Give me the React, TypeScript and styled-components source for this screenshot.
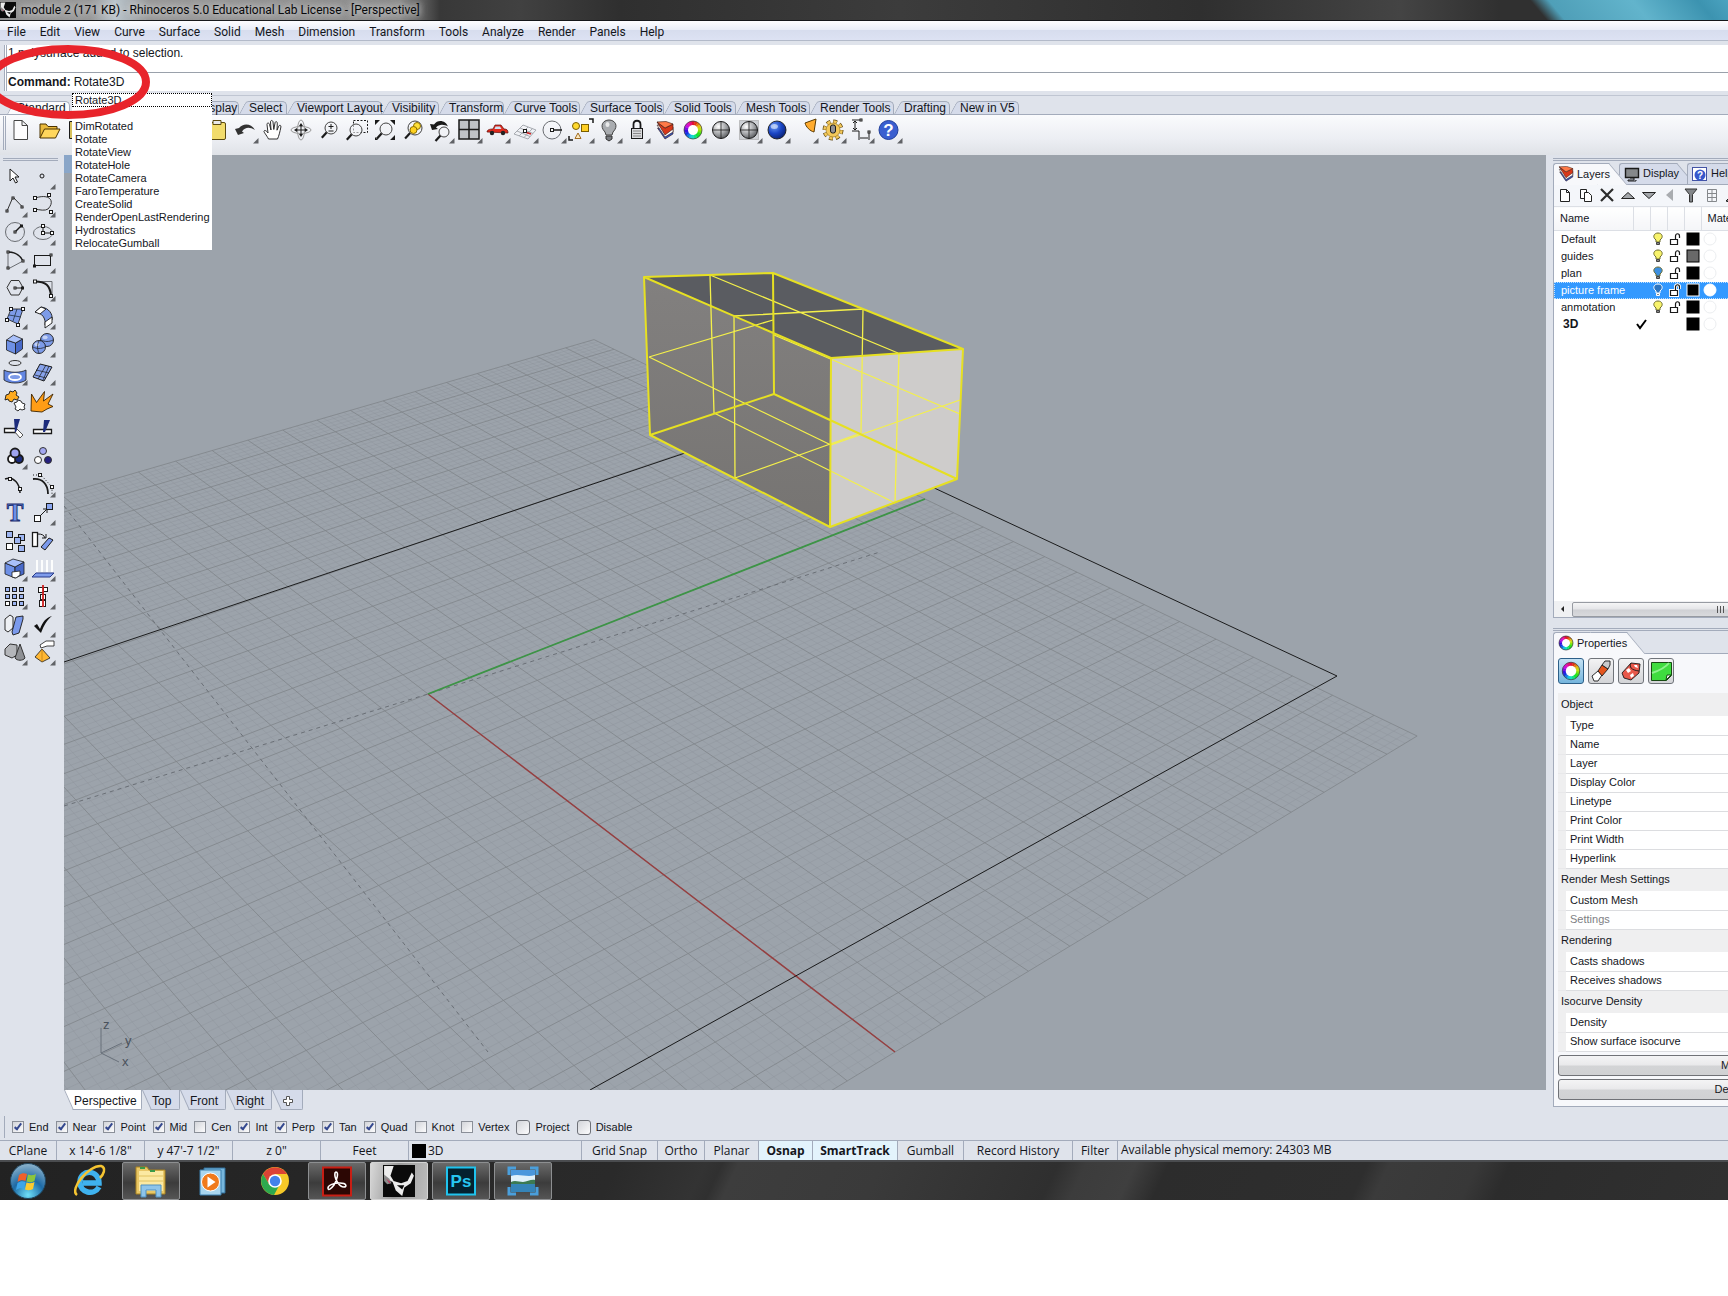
import React from "react";
import styled, { createGlobalStyle, css } from "styled-components";

const sans = `"Liberation Sans", Arial, sans-serif`;
const human = `"Open Sans", "Noto Sans", sans-serif`;
const caption = `Roboto, "Open Sans", sans-serif`;

const c = {
  chrome: "#dfe3eb",
  tab: "#d5dbea",
  edge: "#a3abbb",
  view: "#9ca3ab",
  text: "#14161c",
  blue: "#7d9be8",
  navy: "#1c2c7c",
};

const Global = createGlobalStyle`
  *, *::before, *::after { box-sizing: border-box; }
  body { margin: 0; background: #fff; color: ${c.text}; font: 11px/13px ${sans}; overflow-x: hidden; }
  button, input { font: inherit; color: inherit; }
  ul { list-style: none; margin: 0; padding: 0; }
  svg { display: block; flex: none; }
`;

/* ---------- shell ---------- */

const Window = styled.main`
  display: flex;
  flex-direction: column;
  background: ${c.chrome};
  overflow: hidden;
`;

const TitleBar = styled.header`
  display: flex;
  align-items: center;
  gap: 5px;
  height: 21px;
  border-bottom: 1px solid #15171a;
  font: 12px/20px ${caption};
  color: #08090b;
  text-shadow: 0 0 6px #ddd, 0 0 8px #ccc;
  background:
    linear-gradient(50deg, transparent 0 22px, #4f9fb8 36px, #62b4cc 100px, #3c93b0 150px, #4ba3c0 100%) right / 210px 100% no-repeat,
    linear-gradient(90deg, #8f8f8f 0, #979797 90px, #b9c4cc 115px, #989898 150px, #8c8c8c 400px, #383838 440px, #414141 520px, #2f2f2f 620px, #3c3c3c 900px, #2f2f2f 1200px, #444 1400px, #303030 1500px);
`;

const WindowTitle = styled.h1`
  margin: 0;
  font: inherit;
  white-space: nowrap;
`;

const MenuBar = styled.nav`
  display: flex;
  gap: 14px;
  height: 20px;
  padding-left: 7px;
  border-bottom: 1px solid #b3bac9;
  background: linear-gradient(#fdfdff, #eaeef8 45%, #d7ddee 50%, #dde2f3);
`;

const MenuItem = styled.button`
  padding: 1px 0 0;
  border: 0;
  background: none;
  font: 12px/20px ${caption};
`;

/* ---------- command area ---------- */

const CommandArea = styled.section`
  position: relative;
  z-index: 2;
  height: 54px;
  padding: 4px 0 3px 4px;
`;

const CommandBox = styled.div`
  border-left: 3px double ${c.edge};
  background: #fff;
  font-size: 12px;
`;

const History = styled.p`
  height: 28px;
  margin: 0;
  padding-left: 1px;
  line-height: 16px;
  border-bottom: 1px solid #9aa1ab;
`;

const Prompt = styled.label`
  display: flex;
  align-items: center;
  gap: 3px;
  height: 18px;
  padding-left: 1px;
`;

const CommandInput = styled.input`
  flex: 1;
  height: 16px;
  padding: 0;
  border: 0;
  outline: 0;
  background: none;
`;

const Suggestions = styled.ul`
  position: absolute;
  left: 72px;
  top: 52px;
  width: 140px;
  background: #fff;
`;

const Suggestion = styled.li<{ $active?: boolean }>`
  height: 13px;
  padding-left: 3px;
  ${(p) =>
    p.$active &&
    css`
      height: 14px;
      margin-bottom: 13px;
      padding-left: 2px;
      line-height: 12px;
      border: 1px dotted #000;
    `}
`;

const Marker = styled.svg`
  position: absolute;
  left: 0;
  top: 0;
  pointer-events: none;
`;

/* ---------- tool bars ---------- */

const TabStrip = styled.nav`
  display: flex;
  height: 19px;
  padding: 5px 0 0 7px;
  border-top: 1px solid #c0c6d2;
`;

const ToolTab = styled.button<{ $w: number; $on?: boolean }>`
  position: relative;
  isolation: isolate;
  flex: none;
  width: ${(p) => p.$w}px;
  padding: 1px 0 0 10px;
  border: 0;
  background: none;
  text-align: left;
  white-space: nowrap;
  font-size: 12px;
  line-height: 13px;
  &::before,
  &::after {
    content: "";
    position: absolute;
    z-index: -1;
    top: 0;
    bottom: 0;
    background: ${(p) => (p.$on ? "#fafbfd" : c.tab)};
    border-top: 1px solid ${c.edge};
  }
  &::before {
    left: 0;
    width: 50%;
    border-left: 1px solid ${c.edge};
    border-radius: 3px 0 0 0;
    transform: skewX(-28deg);
    transform-origin: left bottom;
  }
  &::after {
    right: 0;
    width: 55%;
    border-right: 1px solid ${c.edge};
    border-radius: 0 5px 0 0;
  }
`;

const ToolBar = styled.div`
  display: flex;
  height: 41px;
  padding: 1px 0 0 3px;
  border-top: 1px solid ${c.edge};
  background: linear-gradient(#fafbfd, #eceef3 60%, #dfe2e7);
`;

const Grip = styled.span`
  width: 4px;
  height: 34px;
  border-left: 3px double ${c.edge};
`;

const ToolButton = styled.button`
  flex: none;
  width: 28px;
  height: 28px;
  padding: 0;
  border: 0;
  background: none;
`;

/* ---------- middle ---------- */

const Body = styled.div`
  display: flex;
`;

const SideTools = styled.aside`
  flex: none;
  width: 64px;
  padding-top: 3px;
`;

const SideGrip = styled.div`
  height: 4px;
  margin: 0 6px 0 3px;
  border-top: 3px double ${c.edge};
`;

const SideGrid = styled.div`
  display: grid;
  grid-template-columns: 28px 28px;
`;

const Center = styled.section`
  flex: 1;
  min-width: 0;
`;

const Scene = styled.svg`
  width: 100%;
  height: 935px;
  background: ${c.view};
`;

const ViewTabs = styled.nav`
  display: flex;
  height: 20px;
  font: 12px/20px ${sans};
`;

const ViewTab = styled.button<{ $w: number; $on?: boolean }>`
  position: relative;
  isolation: isolate;
  display: flex;
  align-items: center;
  flex: none;
  width: ${(p) => p.$w}px;
  padding: 1px 0 0 10px;
  border: 0;
  background: none;
  &::before,
  &::after {
    content: "";
    position: absolute;
    z-index: -1;
    top: 0;
    bottom: 0;
    background: ${(p) => (p.$on ? "#fff" : c.tab)};
    border-bottom: 1px solid ${c.edge};
  }
  &::before {
    left: 0;
    width: 50%;
    border-left: 1px solid ${c.edge};
    transform: skewX(24deg);
    transform-origin: left top;
  }
  &::after {
    right: 0;
    width: 55%;
    border-right: 1px solid ${c.edge};
    border-radius: 0 0 2px 0;
  }
`;

/* ---------- right panels ---------- */

const Dock = styled.aside`
  flex: none;
  width: 182px;
  padding: 3px 0 0 7px;
  overflow: hidden;
`;

const DockGrip = styled.div`
  width: 366px;
  height: 5px;
  border-top: 3px double ${c.edge};
`;

const PanelTabs = styled.nav`
  display: flex;
  width: 366px;
  height: 22px;
  border-bottom: 1px solid ${c.edge};
`;

const PanelTab = styled.button<{ $w: number; $on?: boolean }>`
  position: relative;
  isolation: isolate;
  z-index: ${(p) => (p.$on ? 1 : 0)};
  display: flex;
  align-items: center;
  gap: 3px;
  flex: none;
  width: ${(p) => p.$w}px;
  height: ${(p) => (p.$on ? 22 : 21)}px;
  margin-right: -8px;
  padding: 0 0 0 5px;
  border: 0;
  background: none;
  &::before,
  &::after {
    content: "";
    position: absolute;
    z-index: -1;
    top: 0;
    bottom: 0;
    background: ${(p) => (p.$on ? "#f7f8fb" : c.tab)};
    border-top: 1px solid ${c.edge};
  }
  &::before {
    left: 0;
    width: 60%;
    border-left: 1px solid ${c.edge};
    border-radius: 3px 0 0 0;
  }
  &::after {
    right: 18px;
    width: 40%;
    border-right: 1px solid ${c.edge};
    transform: skewX(40deg);
    transform-origin: right top;
  }
`;

const Panel = styled.section`
  width: 366px;
  border: 1px solid ${c.edge};
  border-top: 0;
`;

const LayersPanel = styled(Panel)`
  height: 433px;
  display: flex;
  flex-direction: column;
  background: #fff;
`;

const PanelTools = styled.div`
  display: flex;
  gap: 1px;
  height: 21px;
  padding-left: 1px;
  background: #f4f6fa;
`;

const SmallTool = styled.button`
  flex: none;
  width: 20px;
  height: 20px;
  padding: 0;
  border: 0;
  background: none;
`;

const LayerTable = styled.table`
  width: 364px;
  table-layout: fixed;
  border-collapse: collapse;
  text-align: left;
  thead th {
    height: 24px;
    padding: 0 0 0 6px;
    border: solid #dcdfe5;
    border-width: 1px 1px 1px 0;
    font-weight: 400;
    background: linear-gradient(#fff, #f4f5f8);
  }
  td,
  tbody th {
    height: 17px;
    padding: 0;
    font-weight: 400;
  }
`;

const LayerRow = styled.tr<{ $on?: boolean; $current?: boolean }>`
  ${(p) =>
    p.$on &&
    css`
      color: #fff;
      background: #3399ff;
      outline: 1px dotted #bfe0ff;
      outline-offset: -1px;
    `}
  th:first-child {
    padding-left: 7px;
    ${(p) =>
      p.$current &&
      css`
        padding-left: 9px;
        font-weight: 700;
        font-size: 12px;
      `}
  }
`;

const ScrollTrack = styled.div`
  display: flex;
  align-items: center;
  margin-top: auto;
  height: 16px;
  background: #f0f1f3;
`;

const ScrollArrow = styled.button`
  width: 18px;
  height: 16px;
  padding: 0 0 0 4px;
  border: 0;
  background: none;
`;

const Thumb = styled.div`
  display: flex;
  justify-content: center;
  align-items: center;
  gap: 2px;
  width: 296px;
  height: 15px;
  border: 1px solid #979ba2;
  border-radius: 2px;
  background: linear-gradient(#f5f5f6, #e4e5e8 48%, #cfd0d4 52%, #d9dadd);
  i {
    width: 1px;
    height: 7px;
    background: #555;
  }
`;

const Splitter = styled.div`
  width: 366px;
  height: 13px;
  border-bottom: 3px double ${c.edge};
  margin-bottom: 1px;
`;

const PropertiesPanel = styled(Panel)`
  padding: 4px 0 6px 4px;
  background: #f7f8fb;
`;

const PropButtons = styled.div`
  display: flex;
  gap: 4px;
  margin-bottom: 9px;
`;

const PropButton = styled.button<{ $on?: boolean }>`
  width: 26px;
  height: 26px;
  padding: 0;
  border: 1px solid ${(p) => (p.$on ? "#2c5f88" : "#70747a")};
  border-radius: 3px;
  background: ${(p) => (p.$on ? "linear-gradient(#c5e2f4, #75b5dd)" : "linear-gradient(#f3f3f4, #d3d4d7)")};
`;

const PropTable = styled.table`
  width: 360px;
  border-collapse: collapse;
  text-align: left;
  background: #fff;
  th {
    height: 23px;
    padding: 0 0 0 3px;
    font-weight: 400;
    background: #efeff0;
  }
  td {
    height: 19px;
    padding: 0 0 0 4px;
    border-bottom: 1px solid #dcdde0;
  }
  td:first-child {
    width: 8px;
    padding: 0;
    border-color: #e8e8ea;
    background: #efeff0;
  }
`;

const PropName = styled.td<{ $dim?: boolean }>`
  color: ${(p) => (p.$dim ? "#7e8084" : "inherit")};
`;

const WideButton = styled.button`
  display: block;
  width: 356px;
  height: 21px;
  margin-top: 3px;
  padding: 0;
  border: 1px solid #707277;
  border-radius: 3px;
  background: linear-gradient(#f4f4f5, #e9e9eb 48%, #d3d4d6 52%, #d0d1d3);
`;

/* ---------- bottom ---------- */

const SnapBar = styled.div`
  display: flex;
  align-items: center;
  gap: 7px;
  height: 26px;
  margin-top: 4px;
  padding-left: 4px;
`;

const SnapGrip = styled.span`
  width: 2px;
  height: 22px;
  border-left: 1px solid ${c.edge};
  margin-right: -1px;
`;

const Snap = styled.label<{ $big?: boolean }>`
  display: flex;
  align-items: center;
  gap: 5px;
  input {
    appearance: none;
    position: relative;
    width: ${(p) => (p.$big ? 14 : 12)}px;
    height: ${(p) => (p.$big ? 15 : 12)}px;
    margin: 0;
    border: 1px solid ${(p) => (p.$big ? "#6e7178" : "#8a8f98")};
    border-radius: ${(p) => (p.$big ? 3 : 0)}px;
    background: linear-gradient(135deg, #d3d5da, #fcfcfd);
  }
  input:checked::after {
    content: "";
    position: absolute;
    left: 3px;
    top: 0;
    width: 4px;
    height: 8px;
    border: solid #34488f;
    border-width: 0 2px 2px 0;
    transform: rotate(38deg);
  }
`;

const StatusBar = styled.footer`
  display: flex;
  height: 20px;
  border-top: 1px solid ${c.edge};
  font: 12px/18px ${human};
  white-space: nowrap;
`;

const Cell = styled.button<{ $w: number; $on?: boolean; $left?: boolean }>`
  display: flex;
  flex: none;
  align-items: center;
  justify-content: ${(p) => (p.$left ? "flex-start" : "center")};
  width: ${(p) => p.$w}px;
  padding: 0 3px;
  border: 0;
  border-right: 1px solid ${c.edge};
  background: ${(p) => (p.$on ? "#e3f3fc" : "none")};
  font-weight: ${(p) => (p.$on ? 700 : 400)};
`;

const Swatch = styled.span`
  width: 14px;
  height: 14px;
  margin-right: 2px;
  background: #000;
`;

const StatusNote = styled.span`
  padding-left: 3px;
`;

const TaskBar = styled.nav`
  display: flex;
  gap: 4px;
  height: 40px;
  border-top: 2px solid #4a4c4f;
  background: linear-gradient(115deg, #222 0, #2a2a2a 560px, #333 640px, #303030 655px, #3d3d3d 670px, #3a3a3a 800px, #2f2f2f 960px, #3c3c3c 985px, #3f3f3f 1030px, #2c2c2c 1060px, #2e2e2e 1240px, #3b3b3b 1260px, #383838 1340px, #2c2c2c 1370px, #333 1728px);
`;

const Task = styled.button<{ $open?: boolean; $front?: boolean; $start?: boolean }>`
  display: flex;
  align-items: center;
  justify-content: center;
  flex: none;
  width: ${(p) => (p.$start ? 56 : 58)}px;
  height: 38px;
  padding: 0;
  border: 1px solid transparent;
  border-radius: 2px;
  background: none;
  ${(p) =>
    p.$open &&
    css`
      border-color: #8d8f91;
      background: linear-gradient(#6a6a6a, #3c3c3c 55%, #555);
    `}
  ${(p) =>
    p.$front &&
    css`
      border-color: #d4d4d4;
      background: linear-gradient(100deg, #d8d8d8, #9a9a9a 45%, #bdbdbd);
    `}
`;

/* ---------- drawings ---------- */

const K = "#1a1a1a";
const ln = { fill: "none", stroke: K, strokeWidth: 1 } as const;
const thin = { fill: "none", stroke: "#6a6d72", strokeWidth: 1 } as const;

const Dot = ({ x, y, s = 3 }: { x: number; y: number; s?: number }) => (
  <rect x={x - s / 2} y={y - s / 2} width={s} height={s} fill="#fff" stroke={K} />
);

const Wheel = ({ x, y, r, w }: { x: number; y: number; r: number; w: number }) => (
  <g fill="none" strokeWidth={w}>
    <circle cx={x} cy={y} r={r} fill="#fff" stroke="none" />
    {Array.from({ length: 18 }, (_, i) => {
      const a = (i * Math.PI) / 9;
      const b = a + 0.4;
      return (
        <path
          key={i}
          stroke={`hsl(${(90 + i * 20) % 360} 85% 48%)`}
          d={`M${x + r * Math.cos(a)} ${y + r * Math.sin(a)}A${r} ${r} 0 0 1 ${x + r * Math.cos(b)} ${y + r * Math.sin(b)}`}
        />
      );
    })}
    <circle cx={x} cy={y} r={r + w / 2} stroke="#3a3a3a" strokeWidth=".7" />
  </g>
);

const Lens = ({ x, y, r = 6 }: { x: number; y: number; r?: number }) => (
  <g>
    <path d={`M${x - r * 0.7} ${y + r * 0.7}l-5 5.5`} stroke={K} strokeWidth="2.200" />
    <circle cx={x} cy={y} r={r} fill="#f2f3f6" fillOpacity=".6" stroke="#444" />
  </g>
);

const Ball = ({ x, y, r, fill }: { x: number; y: number; r: number; fill: string }) => (
  <g>
    <circle cx={x} cy={y} r={r} fill={fill} stroke={K} strokeWidth=".9" />
    <ellipse cx={x - r * 0.3} cy={y - r * 0.4} rx={r * 0.4} ry={r * 0.28} fill="#fff" opacity=".55" />
  </g>
);

const Sphere = ({ grid }: { grid?: boolean }) => (
  <g>
    {grid && <rect x="4.5" y="4.5" width="19" height="19" fill="#cdd0d4" stroke="#999" strokeDasharray="1 1" />}
    <circle cx="14" cy="14" r="8.5" fill="url(#metal)" stroke={K} />
    <path d="M14 5.500V22.500M5.500 14h17" stroke={K} strokeWidth=".8" />
  </g>
);

const Square = ({ x, y, fill = "#9db5f2", s = 6 }: { x: number; y: number; fill?: string; s?: number }) => (
  <rect x={x} y={y} width={s} height={s} fill={fill} stroke={K} />
);

const LayersGlyph = () => (
  <g stroke="#30130e" strokeWidth=".6" strokeLinejoin="round">
    <path d="M6.500 12l7.500 11 8-5V13z" fill="#3157c8" />
    <path d="M6 9l8 12 8-5V11z" fill="#fff" />
    <path d="M6 6l8 13 8-6V8l-8 4z" fill="#d8381a" />
    <path d="M6 6l8 6 8-4-7-2.500z" fill="#ff7a48" />
  </g>
);

const tools: [string, React.ReactNode, boolean?][] = [
  ["New", <path d="M7 4.500h8l5.500 5v14H7z M15 4.500v5h5.500" fill="#fdfdfe" stroke="#444" />],
  ["Open", <g stroke="#4b3300"><path d="M5 22V8h6l2 2.500h9V13" fill="#e9b93c" /><path d="M5 22l4.500-9H25l-4.500 9z" fill="#ffd65c" /></g>],
  ["Save", <path d="M6.500 5.500h15v17h-15z M10 5.500v6h8v-6" fill="#d7c15e" stroke={K} />],
  ["Print", <path d="M5 12h18v8H5z" {...ln} />],
  ["Notes", <path d="M7 5h14v18H7z" {...ln} />],
  ["Cut", <path d="M9 5l8 15M19 5l-8 15" {...ln} />],
  ["Copy", <path d="M6 6h9v12H6z" {...ln} />],
  ["Paste", <g stroke="#5b4a10"><rect x="5.500" y="6.500" width="17" height="17" rx="1.500" fill="#f2dc6c" /><path d="M10 4.500h8v4h-8z" fill="#e8e8e8" /></g>],
  ["Undo", <path d="M4 13l3 6 6-2-2-1.500c3-4 7-5 13-1.500-4-7-12-7-16-2z" fill="#333" />, true],
  ["Pan", <path d="M9.500 23c-2-4-5-7-4.500-8 1-1.500 3 .5 4 2L8 8.500c0-2 2-2 2.500 0L12 14l-.5-8c0-2 2.300-2 2.500 0l.8 7.500L16 7c.2-2 2.400-1.600 2.300.2l-.3 7 1.700-4c.8-1.700 2.600-.9 2.200.8-1 5-2 9-3.400 12z" fill="#fff" stroke={K} strokeWidth=".9" />],
  ["Rotate view", <g><ellipse cx="14" cy="14" rx="10" ry="3.500" {...thin} stroke="#999" /><ellipse cx="14" cy="14" rx="3.500" ry="10" {...thin} stroke="#999" /><path d="M14 9v10M9 14h10" stroke={K} /><path d="M12 10l2-3 2 3zM12 18l2 3 2-3zM10 12l-3 2 3 2zM18 12l3 2-3 2z" fill={K} /></g>],
  ["Zoom dynamic", <g><Lens x={16} y={12} /><path d="M13.500 10.500h5M16 8v5M13.500 15h5" stroke={K} /></g>],
  ["Zoom window", <g><rect x="10.500" y="4.500" width="14" height="12" {...ln} strokeDasharray="2 1.500" /><Lens x={13} y={14} /></g>],
  ["Zoom extents", <g><Lens x={15} y={13} /><path d="M4 4h5L4 9zM24 4v5l-5-5zM24 24h-5l5-5zM4 24v-3l3 3z" fill={K} /></g>],
  ["Zoom selected", <g><Lens x={16} y={12} r={7} /><circle cx="18" cy="10" r="3.500" fill="#ffe03a" stroke="#8a6d00" /><circle cx="14.500" cy="14" r="3.500" fill="#ffd21f" stroke="#8a6d00" /></g>],
  ["Undo view", <g><path d="M3 8l2 6 6-1-2-1.500c3-4 9-3 12-1 -2-6-10-8-14-2z" fill={K} /><Lens x={17} y={16} r={5} /></g>, true],
  ["Four viewports", <g><rect x="4" y="4" width="20" height="19" fill="#bfc2c6" stroke={K} strokeWidth="1.500" /><path d="M14 4v19M4 13.500h20" stroke={K} strokeWidth="1.500" /></g>, true],
  ["Named view", <g><path d="M4 16c0-3 5-3 6-3l2-4h6l3 4c3 0 4 1 4 4z" fill="#e02a1e" stroke="#5c0d08" strokeWidth=".7" /><path d="M12.500 10.500h4.500l1.500 2.500h-7z" fill="#cfe2f2" /><circle cx="9" cy="17" r="2.200" fill="#222" /><circle cx="20" cy="17" r="2.200" fill="#222" /></g>, true],
  ["Construction plane", <g><path d="M3 18l9-9 13 5-8 9zM6 15l13 5.500M9 12l13 5.500M8 20l9-9M13 21.500l8.500-9" fill="none" stroke="#a6aab0" /><path d="M14 16l6 2" stroke="#c22" strokeWidth="1.500" /><Dot x={14} y={15} /></g>, true],
  ["Set center", <g><circle cx="13" cy="14" r="9" {...thin} /><path d="M13 14h10" stroke={K} strokeWidth="1.500" /><Dot x={13} y={14} /></g>, true],
  ["Select", <g><path d="M22 3h4v4M2 20v4h4" {...ln} strokeWidth="1.500" /><circle cx="9" cy="10" r="3.500" fill="#ffd92e" stroke="#7b5f00" /><rect x="14.500" y="8.500" width="7" height="7" fill="#ffcf24" stroke="#7b5f00" /><path d="M11 17l3 5.500H8z" fill="#fbe9c0" stroke="#a06a20" /></g>, true],
  ["Hide", <g><path d="M10 16c-6-6-2-12 4-12s10 6 4 12l-1 3h-6z" fill="#a9acb0" stroke="#444" /><path d="M11 20h6v3l-3 2-3-2z" fill="#787b80" stroke="#333" /><ellipse cx="12.500" cy="8.500" rx="2" ry="2.600" fill="#e8e9ea" /></g>, true],
  ["Lock", <g><path d="M10.500 13V8.500c0-5 7-5 7 0V13" {...ln} strokeWidth="1.800" /><rect x="8.500" y="12.500" width="11" height="10" fill="#d9dadc" stroke={K} /><path d="M10 15h8M10 17.500h8M10 20h8" stroke="#888" /></g>, true],
  ["Layers", <LayersGlyph />, true],
  ["Properties", <Wheel x={14} y={14} r={7} w={4} />, true],
  ["Shade", <Sphere />],
  ["Ghosted", <Sphere grid />, true],
  ["Render", <Ball x={14} y={14} r={9} fill="url(#sea)" />, true],
  ["Spotlight", <path d="M14 7l11-4-2 13c-4-1-8-5-9-9z" fill="#ffab2e" stroke="#5a3a00" />, true],
  ["Options", <g><circle cx="14" cy="14" r="8" fill="none" stroke="#5b430c" strokeWidth="5" strokeDasharray="3.600 2.680" /><circle cx="14" cy="14" r="8" fill="none" stroke="#f3c85a" strokeWidth="3.500" strokeDasharray="3 3.280" strokeDashoffset="-.3" /><circle cx="14" cy="14" r="7" fill="#f3c85a" stroke="#8a6a1c" strokeWidth=".6" /><rect x="11.500" y="9" width="5" height="8" rx="2" fill="#8f9094" stroke={K} /></g>, true],
  ["Dimension", <g><path d="M5 4h9M5 15h7M8 5v9M12 15v9M22 17v7M13 22h8" {...ln} /><path d="M6 7l2-2 2 2M6 12l2 2 2-2" {...ln} /><Dot x={14} y={4} s={2} /><Dot x={22} y={16} s={2} /></g>, true],
  ["Help", <g><circle cx="13.500" cy="14" r="9.500" fill="#3a5fd0" stroke="#22409c" /><text x="13.500" y="20" textAnchor="middle" fontFamily="Liberation Sans" fontWeight="700" fontSize="17" fill="#fff">?</text></g>, true],
];

const side: [string, React.ReactNode, boolean?][] = [
  ["Cancel", <path d="M10 7v12l3-3 2.500 5 2-1-2.500-5h4z" fill="#fff" stroke={K} />],
  ["Point", <circle cx="14" cy="14" r="2" {...ln} />, true],
  ["Polyline", <g><path d="M7 21l6-14 10 10.500" {...thin} stroke="#333" /><Dot x={7} y={21} s={2} /><Dot x={13} y={8} s={2} /><Dot x={22} y={17} s={2} /></g>, true],
  ["Curve", <g><path d="M7 8c16-5 20 4 13 11-3 2-8 1-13 0" {...thin} stroke="#333" /><Dot x={7} y={8} /><Dot x={21} y={5} /><Dot x={7} y={20} /><Dot x={23} y={22} /></g>, true],
  ["Circle", <g><circle cx="15" cy="14" r="9.500" {...thin} /><path d="M15 14l6-6" stroke={K} strokeWidth="1.500" /><Dot x={15} y={14} s={2} /><Dot x={21.5} y={8} s={2} /></g>, true],
  ["Ellipse", <g><ellipse cx="15" cy="15" rx="9.500" ry="6.500" {...thin} /><path d="M15 15h9M15 9v6" stroke={K} /><Dot x={15} y={15} /><Dot x={24} y={15} /><Dot x={15} y={8} /></g>, true],
  ["Arc", <g><path d="M8 6c8 0 12 3 15 9" {...ln} strokeWidth="1.500" /><path d="M8 6v17l15-8" {...thin} /><Dot x={8} y={6} s={2} /><Dot x={23} y={15} s={2} /><Dot x={8} y={22} s={2} /></g>, true],
  ["Rectangle", <g><rect x="6.500" y="9.500" width="16" height="10" {...ln} /><Dot x={6.5} y={20} s={2} /><Dot x={23} y={9} s={2} /></g>, true],
  ["Polygon", <g><path d="M11 6.500h8l4 7-4 7.500h-8l-4-7.500z" {...thin} stroke="#333" /><path d="M15 14h8" stroke={K} /><Dot x={15} y={14} s={2} /><Dot x={22.5} y={14} s={2} /></g>, true],
  ["Fillet", <g><path d="M7 7.500h17V22" {...thin} /><path d="M7 7.500c11 0 15 4 16 14" {...ln} strokeWidth="2" /><Dot x={7} y={7.5} /><Dot x={23} y={22} /></g>, true],
  ["Surface", <g><path d="M11 7h12l-5 15-11-5z" fill={c.blue} stroke={K} strokeWidth=".8" /><path d="M9 13l12 2M17 7l-4 12" stroke="#234" strokeWidth=".8" /><Dot x={11} y={7} /><Dot x={23} y={7} /><Dot x={7} y={18} /><Dot x={18} y={23} /></g>, true],
  ["Extend surface", <g stroke={K} strokeWidth=".9"><path d="M7 10l6-5c8 1 12 7 11 13l-7 5c1-7-3-12-10-13z" fill={c.blue} /><path d="M7 10l6-5 5 2-6 5zM24 15v6l-7 5v-6z" fill="#fff" /></g>, true],
  ["Box", <g stroke={K} strokeWidth=".8"><path d="M6.500 10v10l9 4V13z" fill="#6e90e6" /><path d="M15.500 13v11l7-5V9z" fill="#4869c8" /><path d="M6.500 10l7-5 9 4-7 4z" fill="#a9c0fa" /></g>, true],
  ["Spheres", <g><Ball x={19} y={10} r={6.5} fill={c.blue} /><Ball x={11} y={17} r={6.5} fill={c.blue} /><path d="M5 17c4 2 8 2 12 0M13 10c4 2 8 2 12 0M11 11c-2 4-2 8 0 12" {...ln} strokeWidth=".7" /></g>, true],
  ["Revolve", <g><ellipse cx="15" cy="5" rx="6" ry="2.500" {...thin} stroke="#333" /><path d="M4 12c5 3 17 3 22 0v10c-5 4-17 4-22 0z" fill="#6487e2" stroke={K} strokeWidth=".8" /><ellipse cx="15" cy="19" rx="6" ry="3" fill={c.blue} stroke="#fff" strokeWidth="1.800" /></g>, true],
  ["Plane", <g><path d="M5 19l7-13 12 3-8 14z" fill="#88a3ec" stroke={K} /><path d="M8 12l13 3M10 21l8-14M7 17l11 3M15 22l6-14" {...ln} strokeWidth=".7" /></g>, true],
  ["Join", <g stroke={K} strokeWidth=".9"><path d="M6 9l3-1 1-3 3 1 2-2 2 3-1 2 3 2-2 3-3-1-2 3-3-1-1-2-3 1z" fill="#ffab1e" /><path d="M14 17l3-1 1-2 3 1 1 2 3 1-1 3 1 2-3 1-2-1-2 2-3-2 1-2z" fill="#fff" /></g>],
  ["Explode", <path d="M3 25L3.500 8l5 8.500L16.500 5.500l-1 9.500L25 8l-5 10 5 2.500-6 2.500-5 3z" fill="#ff9d16" stroke="#3c2400" strokeWidth=".9" />],
  ["Trim", <g><path d="M4.500 14.500h11v4h-11z" fill="#fff" stroke={K} strokeWidth="1.300" /><path d="M17 15l6 6-3 3-5-6z" fill="#fff" stroke="#555" /><path d="M14 5h6l-4 13h-1z" fill={c.navy} /></g>],
  ["Split", <g><path d="M5.500 15.500h18v4h-18z" fill="#fff" stroke={K} strokeWidth="1.300" /><path d="M16 6h6l-5 12h-2z" fill={c.navy} /></g>],
  ["Group", <g stroke={K} strokeWidth="1.800"><circle cx="12" cy="17" r="4" fill="#fff" /><circle cx="19" cy="17" r="4" fill={c.navy} /><circle cx="15" cy="11" r="4.500" fill="#9ea3ee" /></g>, true],
  ["Ungroup", <g stroke="#333"><circle cx="15" cy="9" r="3.500" fill="#a3a8f2" /><circle cx="10" cy="18" r="3.500" fill="#fff" /><circle cx="20" cy="18" r="3.500" fill="#242080" /></g>],
  ["Edit points", <g><path d="M5 9c9-3 15 5 15 14" {...ln} strokeWidth="1.500" /><Dot x={10} y={9} /><Dot x={20} y={19} /></g>],
  ["Control points", <g><path d="M5 9c9-1 15 5 15 15" {...ln} strokeWidth="1.800" /><path d="M5 5h8l11 12v7" {...ln} strokeDasharray="1 2" /><Dot x={12} y={5} /><Dot x={24} y={17} /></g>, true],
  ["Text", <text x="15" y="23" textAnchor="middle" fontFamily="Liberation Serif" fontWeight="700" fontSize="25" fill="#6f90e8" stroke="#1b2e70" strokeWidth=".9">T</text>],
  ["Move", <g><path d="M12 18l7-7M19 15v-4h-4" {...ln} /><Square x={6.5} y={17.5} fill="#fff" /><Square x={18.5} y={5.5} fill="#8aa6f0" /></g>, true],
  ["Copy objects", <g><Square x={6.5} y={5.5} /><Square x={6.5} y={17.5} fill="#fff" /><Square x={18.5} y={8.5} /><Square x={14.5} y={11.5} /><Square x={18.5} y={19.5} /></g>],
  ["Rotate", <g><rect x="4.500" y="6.500" width="5" height="14" fill="#fff" stroke={K} strokeWidth="1.300" /><path d="M10 8c4 0 6 1 7 4M18 8v4h-4" {...ln} /><path d="M13 21l8-9 4 2-8 10z" fill="#7b9aec" stroke={K} /></g>],
  ["Shell", <g stroke={K} strokeWidth=".8"><path d="M5 9v11l10 4V13z" fill="#6e90e6" /><path d="M15 13v11l9-4V8z" fill="#4869c8" /><path d="M5 9l8-4 11 3-9 5z" fill="#a9c0fa" /><path d="M12 18l8-1v4l-4 3-4-1z" fill="#fff" /></g>, true],
  ["Project", <g><path d="M9 6v12M14 6v12M19 6v12M24 6v12" stroke="#fff" strokeWidth="1.800" /><path d="M4 23l4-4h18l-4 4z" fill="#7f9cec" stroke="#26398a" /></g>, true],
  ["Array", <g>{[5, 12, 19].map((y) => [5, 12, 19].map((x) => <Square key={x + "." + y} x={x + 0.5} y={y + 0.5} s={4} fill={x === 5 && y === 19 ? "#fff" : "#9db5f2"} />))}</g>, true],
  ["Align", <g><Square x={10.5} y={5.5} s={5} fill="#fff" /><Square x={15.5} y={5.5} s={4} fill="#fff" /><Square x={12.5} y={12.5} s={5} fill="#fff" /><Square x={11.5} y={18.5} s={6} fill="#fff" /><path d="M15 3v22" stroke="#d02020" strokeWidth="1.800" /></g>, true],
  ["Flow", <g stroke={K} strokeWidth=".9"><path d="M5 9l5-4 3 2v11l-5 4-3-2z" fill="#eef0f4" /><path d="M12 22l4-15 7-1v3l-4 14-6 2z" fill="#7b9aec" /></g>, true],
  ["Check", <path d="M6 16l3-2 3 5c3-8 6-11 12-13-5 4-8 9-11 17z" fill="#111" />, true],
  ["Solids", <g stroke="#333"><path d="M5 11l5-5 7 1v10l-5 3-7-3z" fill="#b4b6ba" /><path d="M20 6l5 14c-2 3-8 3-10 0z" fill="#8e9094" /></g>, true],
  ["Drape", <g stroke={K} strokeWidth=".8"><path d="M14 11l8 9-8 4-7-5z" fill="#ffb733" /><path d="M14 11v13" stroke="#b87a10" strokeWidth=".7" /><path d="M12 7l6-4h8v5h-7l-6 2z" fill="#fff" /></g>, true],
];

const ToolIcon = ({ art, flyout }: { art: React.ReactNode; flyout?: boolean }) => (
  <svg width="28" height="28" viewBox="0 0 28 28" aria-hidden>
    {art}
    {flyout && <path d="M27.500 22v5.500H22z" fill="#606266" />}
  </svg>
);

const HiddenDefs = styled.svg`
  position: absolute;
`;

const Defs = () => (
  <HiddenDefs width="0" height="0" aria-hidden>
    <defs>
      <radialGradient id="metal" cx=".35" cy=".3" r=".8">
        <stop offset="0" stopColor="#fff" />
        <stop offset=".6" stopColor="#9a9c9f" />
        <stop offset="1" stopColor="#4c4e51" />
      </radialGradient>
      <radialGradient id="sea" cx=".35" cy=".3" r=".8">
        <stop offset="0" stopColor="#6b9cf5" />
        <stop offset=".5" stopColor="#1a45c4" />
        <stop offset="1" stopColor="#081c66" />
      </radialGradient>
      <radialGradient id="orb" cx=".5" cy=".9" r=".9">
        <stop offset="0" stopColor="#6fe0f8" />
        <stop offset=".5" stopColor="#1d6aa5" />
        <stop offset="1" stopColor="#8fb4cc" />
      </radialGradient>
      <linearGradient id="side" x1="0" y1="0" x2="0" y2="1">
        <stop offset="0" stopColor="#82807f" />
        <stop offset="1" stopColor="#767472" />
      </linearGradient>
    </defs>
  </HiddenDefs>
);

const RhinoGlyph = ({ size }: { size: number }) => (
  <svg width={size} height={size} viewBox="0 0 30 30" aria-hidden>
    <rect width="30" height="30" fill="#0a0a0a" />
    <path d="M1 1h9l-3 9 3 5 7 2 6-2 4-8 2 3-3 7-6 4-2 8-6-5-3-8-8-4z" fill="#ececec" />
    <path d="M1 9l5 4 2 4-4 1-3-3z" fill="#8a8a8a" />
    <path d="M3 13l4 3-1 1z" fill="#c8325a" />
    <path d="M13 19l5 4 2-4z" fill="#0a0a0a" />
  </svg>
);

/* ---------- perspective scene ---------- */

const CELLS = 14;
const MINOR = 5;

// Projects a ground point, in units of half the grid, to the view.
const project = (u: number, v: number) => {
  const d = 1 - 0.23446 * u + 0.19794 * v;
  const x = (428 + 257.2 * u + 680.1 * v) / d;
  const y = (694 + 111.3 * u - 96.2 * v) / d;
  return `${x.toFixed(1)} ${y.toFixed(1)}`;
};

const gridPath = (major: boolean) => {
  const n = CELLS * MINOR;
  let d = "";
  for (let i = -n; i <= n; i++) {
    if ((i % MINOR === 0) !== major) continue;
    const t = i / n;
    d += `M${project(t, -1)}L${project(t, 1)}M${project(-1, t)}L${project(1, t)}`;
  }
  return d;
};

const Viewport = () => (
  <Scene viewBox="64 155 1482 935" preserveAspectRatio="xMinYMin slice" role="img" aria-label="Perspective view">
    <path d="M64 155h80v18H64z" fill="#8aa6c8" />
    <g fill="none">
      <path d={gridPath(false)} stroke="#8b939b" strokeOpacity=".45" strokeWidth=".8" />
      <path d={gridPath(true)} stroke="#80858a" strokeOpacity=".8" />
      <path d="M64 506L488 1052M64 806L428 694 880 552" stroke="#6a6f76" strokeDasharray="4 4" />
      <path d="M428 694L895 1052" stroke="#963f40" strokeWidth="1.500" />
      <path d="M428 694L925 499" stroke="#3d9446" strokeWidth="1.800" />
      <path d="M64 662L700 448M900 472L1337 676 590 1090" stroke="#0c0c0c" strokeWidth=".9" />
    </g>
    <path d="M644 277L831 358 830 527 650 435z" fill="url(#side)" />
    <path d="M644 277L773 273 963 349 831 358z" fill="#5a5c61" />
    <path d="M831 358L963 349 957 479 830 527z" fill="#cecccb" />
    <g fill="none" strokeLinejoin="round">
      <path
        d="M710 275L898 353M734 316L863 309M649 357L831 445 960 400M734 316L735 478M899 353L895 503M710 275L714 413M649 357L773 320M714 413L895 503M735 478L861 433M863 309L861 433M774 335L960 414"
        stroke="#f4f04a"
        strokeWidth="1.300"
      />
      <path
        d="M644 277L773 273 963 349 831 358zL650 435 830 527 957 479 963 349M831 358L830 527M773 273L774 394 650 435M774 394L957 479"
        stroke="#e6e022"
        strokeWidth="2"
      />
    </g>
    <path d="M101 1028v25l21-10M101 1053l18 9" fill="none" stroke="#68707a" />
    <g fill="#4a525c" fontFamily="Liberation Sans" fontSize="13">
      <text x="103" y="1029">z</text>
      <text x="125" y="1045">y</text>
      <text x="122" y="1066">x</text>
    </g>
  </Scene>
);

/* ---------- layers ---------- */

const Bulb = ({ fill, light }: { fill: string; light?: boolean }) => (
  <svg width="16" height="16" viewBox="0 0 16 16" aria-hidden>
    <path d="M6 11V9C2 6 4 2 8 2s6 4 2 7v2z" fill={fill} stroke={light ? "#fff" : "#6b6a2c"} />
    <path d="M6.500 11.500h3v2h-3z" fill="#888" stroke={light ? "#fff" : "#444"} />
  </svg>
);

const OpenLock = ({ light }: { light?: boolean }) => (
  <svg width="16" height="16" viewBox="0 0 16 16" aria-hidden>
    {light && <path d="M3.500 8.500h7v5h-7zM8.500 8.500V5c0-3 4-3 4 0v2" fill="none" stroke="#fff" strokeWidth="3" />}
    <path d="M3.500 8.500h7v5h-7z" fill="#fff" stroke={K} strokeWidth="1.200" />
    <path d="M8.500 8.500V5c0-3 4-3 4 0v2" fill="none" stroke={K} strokeWidth="1.200" />
  </svg>
);

const layers = [
  { name: "Default", bulb: "#f8f36c", color: "#000" },
  { name: "guides", bulb: "#f8f36c", color: "#696969" },
  { name: "plan", bulb: "#3c8fe0", color: "#000" },
  { name: "picture frame", bulb: "#2c74c0", color: "#000", on: true },
  { name: "anmotation", bulb: "#f8f36c", color: "#000" },
  { name: "3D", color: "#000", current: true },
];

const layerTools: [string, React.ReactNode][] = [
  ["New layer", <path d="M5.500 4.500h6l3 3v9h-9zM11.500 4.500v3h3" fill="#fff" stroke="#222" />],
  ["New sublayer", <g fill="#fff" stroke="#222"><path d="M4.500 4.500h6v9h-6z" /><path d="M8.500 7.500h4l3 3v6h-7z" /></g>],
  ["Delete", <path d="M4 4l12 12M16 4L4 16" stroke="#2c2c2c" strokeWidth="2.200" />],
  ["Move up", <path d="M3.500 13.500l6.500-6 6.500 6z" fill="#a4a7ab" stroke="#222" />],
  ["Move down", <path d="M3.500 7.500l6.500 6 6.500-6z" fill="#a4a7ab" stroke="#222" />],
  ["Move left", <path d="M13 4v12l-7-6z" fill="#a9acb0" />],
  ["Filter", <path d="M4 4h12l-4.500 5.500V17h-3V9.500z" fill="#83868a" stroke="#333" />],
  ["Columns", <path d="M5.500 4.500h9v12h-9zM5.500 8.500h9M5.500 12.500h9M10 5v11" fill="none" stroke="#85888c" />],
  ["Tools", <path d="M3 16L14 5l3 3L6 17z" fill="#777" stroke="#222" />],
];

const Small = ({ children }: { children: React.ReactNode }) => (
  <svg width="16" height="16" viewBox="4.500 5 19 19" aria-hidden>{children}</svg>
);

const LayerPanel = () => (
  <>
    <PanelTabs>
      <PanelTab $w={74} $on><Small><LayersGlyph /></Small>Layers</PanelTab>
      <PanelTab $w={76}>
        <svg width="16" height="16" viewBox="0 0 16 16" aria-hidden>
          <path d="M1.500 2.500h13v9h-13z" fill="#85888b" stroke={K} strokeWidth="1.400" />
          <path d="M6 12h4v2H4v1h8v-1" fill="none" stroke={K} />
        </svg>
        Display
      </PanelTab>
      <PanelTab $w={70}>
        <svg width="16" height="16" viewBox="0 0 16 16" aria-hidden>
          <rect x=".5" y="1.500" width="14" height="13" fill="#fff" stroke="#4353a5" />
          <circle cx="8" cy="9" r="5.500" fill="#3658cc" />
          <text x="8" y="12.500" textAnchor="middle" fontSize="10" fontWeight="700" fill="#fff">?</text>
        </svg>
        Help
      </PanelTab>
    </PanelTabs>
    <LayersPanel>
      <PanelTools>
        {layerTools.map(([name, art]) => (
          <SmallTool key={name} aria-label={name}>
            <svg width="20" height="20" viewBox="0 0 20 20" aria-hidden>{art}</svg>
          </SmallTool>
        ))}
      </PanelTools>
      <LayerTable>
        <colgroup>
          <col width="79" /><col width="17" /><col width="17" /><col width="17" /><col width="17" /><col />
        </colgroup>
        <thead>
          <tr><th>Name</th><th /><th /><th /><th /><th>Material</th></tr>
        </thead>
        <tbody>
          {layers.map((l) => (
            <LayerRow key={l.name} $on={l.on} $current={l.current}>
              <th scope="row">{l.name}</th>
              <td>{l.current && <svg width="16" height="14" viewBox="0 0 16 14" aria-hidden><path d="M4 7l3 4 6-8" fill="none" stroke="#000" strokeWidth="2" /></svg>}</td>
              <td>{l.bulb && <Bulb fill={l.bulb} light={l.on} />}</td>
              <td>{l.bulb && <OpenLock light={l.on} />}</td>
              <td>
                <svg width="16" height="14" viewBox="0 0 16 14" aria-hidden>
                  <rect x="3" y="1" width="12" height="12" fill={l.color} stroke={l.on ? "#fff" : "#000"} />
                </svg>
              </td>
              <td>
                <svg width="18" height="14" viewBox="0 0 18 14" aria-hidden>
                  <circle cx="9" cy="7" r="6" fill="#fff" stroke={l.on ? "#fff" : "#eceef0"} />
                </svg>
              </td>
            </LayerRow>
          ))}
        </tbody>
      </LayerTable>
      <ScrollTrack>
        <ScrollArrow aria-label="Scroll left">
          <svg width="8" height="8" viewBox="0 0 8 8" aria-hidden><path d="M6 1v6L3 4z" fill="#222" /></svg>
        </ScrollArrow>
        <Thumb><i /><i /><i /></Thumb>
      </ScrollTrack>
    </LayersPanel>
  </>
);

/* ---------- properties ---------- */

const groups: [string, string[]][] = [
  ["Object", ["Type", "Name", "Layer", "Display Color", "Linetype", "Print Color", "Print Width", "Hyperlink"]],
  ["Render Mesh Settings", ["Custom Mesh", "Settings"]],
  ["Rendering", ["Casts shadows", "Receives shadows"]],
  ["Isocurve Density", ["Density", "Show surface isocurve"]],
];

const propPages: [string, React.ReactNode][] = [
  ["Object", <Wheel x={12} y={12} r={7} w={3.5} />],
  ["Material", <g stroke={K} strokeWidth=".9"><path d="M3 17l6-5 4 4-4 6H5z" fill="#fff" /><path d="M9 12l4-6 6 4-6 7z" fill="#e5551e" /><path d="M13 6l3-4h5v4l-2 4z" fill="#c9cacc" /></g>],
  ["Texture mapping", <g stroke={K} strokeWidth=".9"><path d="M3 14l9-10 9 1-1 9-8 7-7-2z" fill="#e8584a" /><path d="M12 4c-2 4 0 7 8 8" fill="none" /><path d="M7 11l3-2 2 3-3 2zM11 16l3-2 1 3-3 2zM15 6l3 0 1 3-3-1z" fill="#fff" stroke="none" /></g>],
  ["Decals", <g stroke="#174a12"><path d="M2.500 3.500h20v13l-5 5h-15z" fill="#3fdc3f" /><path d="M3 14C9 12 16 9 20 4" fill="none" stroke="#8df28d" strokeWidth="2" /><path d="M17 21l1-5h4z" fill="#fff" /></g>],
];

const PropPanel = () => (
  <>
    <PanelTabs>
      <PanelTab $w={92} $on>
        <svg width="16" height="16" viewBox="0 0 16 16" aria-hidden><Wheel x={8} y={8} r={5.5} w={3} /></svg>
        Properties
      </PanelTab>
    </PanelTabs>
    <PropertiesPanel>
      <PropButtons>
        {propPages.map(([name, art], i) => (
          <PropButton key={name} aria-label={name} $on={i === 0}>
            <svg width="24" height="24" viewBox="0 0 24 24" aria-hidden>{art}</svg>
          </PropButton>
        ))}
      </PropButtons>
      <PropTable>
        {groups.map(([title, names]) => (
          <tbody key={title}>
            <tr><th colSpan={2}>{title}</th></tr>
            {names.map((n) => (
              <tr key={n}><td /><PropName $dim={n === "Settings"}>{n}</PropName></tr>
            ))}
          </tbody>
        ))}
      </PropTable>
      <WideButton>Match</WideButton>
      <WideButton>Details...</WideButton>
    </PropertiesPanel>
  </>
);

/* ---------- data for the bars ---------- */

const menus = ["File", "Edit", "View", "Curve", "Surface", "Solid", "Mesh", "Dimension", "Transform", "Tools", "Analyze", "Render", "Panels", "Help"];

const hints = ["Rotate3D", "DimRotated", "Rotate", "RotateView", "RotateHole", "RotateCamera", "FaroTemperature", "CreateSolid", "RenderOpenLastRendering", "Hydrostatics", "RelocateGumball"];

const toolTabs: [string, number][] = [
  ["Standard", 63], ["CPlanes", 60], ["Set View", 58], ["Display", 51], ["Select", 48], ["Viewport Layout", 95], ["Visibility", 57],
  ["Transform", 65], ["Curve Tools", 76], ["Surface Tools", 84], ["Solid Tools", 72], ["Mesh Tools", 74], ["Render Tools", 84], ["Drafting", 56], ["New in V5", 69],
];

const snaps: [string, boolean][] = [
  ["End", true], ["Near", true], ["Point", true], ["Mid", true], ["Cen", false], ["Int", true], ["Perp", true],
  ["Tan", true], ["Quad", true], ["Knot", false], ["Vertex", false], ["Project", false], ["Disable", false],
];

const modes: [string, number, boolean?][] = [
  ["Grid Snap", 76], ["Ortho", 47], ["Planar", 54], ["Osnap", 54, true], ["SmartTrack", 85, true], ["Gumball", 66], ["Record History", 109], ["Filter", 45],
];

const tasks: { name: string; art: React.ReactNode; open?: boolean; front?: boolean; start?: boolean }[] = [
  {
    name: "Start", start: true,
    art: <g><circle cx="18" cy="18" r="17.500" fill="url(#orb)" stroke="#20465f" /><path d="M9 12c3-2 5-2 8-1l-1.500 7c-3-1-5-1-8 1z" fill="#f0602a" /><path d="M18 11.500c3 1 5 1 8-.5l-1.500 7c-3 1.500-5 1.500-8 .5z" fill="#8cc63c" /><path d="M7.500 20c3-2 5-2 8-1L14 26c-3-1-5-1-8 1z" fill="#3da5e8" /><path d="M16.500 19.500c3 1 5 1 8-.5L23 26c-3 1.500-5 1.500-8 .5z" fill="#fccb2e" /></g>,
  },
  {
    name: "Internet Explorer",
    art: <g fill="none"><path d="M28 24c-5 9-19 6-19-5 0-13 19-13 19 1H12" stroke="#3fb2ee" strokeWidth="5.500" /><path d="M6 32C-2 26 18 2 30 3c6 2 2 9-1 12" stroke="#f5c431" strokeWidth="2.500" /></g>,
  },
  {
    name: "Explorer", open: true,
    art: <g><path d="M3 4h11l2 3h16v24H3z" fill="#e9c766" stroke="#a98320" /><path d="M6 8h24v20H6z" fill="#fbe9a2" /><path d="M6 13h24M6 18h24" stroke="#e0c260" /><path d="M7 5h5M17 8h5" stroke="#3a9a48" strokeWidth="2" /><path d="M8 34V22h20v12h-5v-7H13v7z" fill="#8dc4ea" stroke="#4f90c0" /></g>,
  },
  {
    name: "Media Player",
    art: <g><path d="M9 5h21v25H9z" fill="#77b6dc" stroke="#2f6d98" /><path d="M5 7h21v25H5z" fill="#a9d6ef" stroke="#3a7eae" /><circle cx="15.500" cy="19" r="9" fill="#f07a1c" stroke="#fff" /><path d="M12.500 13.500v11l8-5.500z" fill="#fff" /></g>,
  },
  {
    name: "Chrome",
    art: <g><circle cx="18" cy="18" r="14" fill="#f6c928" /><path d="M6 11a14 14 0 0 1 24 0H18l-6 10z" fill="#dc4335" /><path d="M6 11a14 14 0 0 0 11 21l6-11H12z" fill="#2da94f" /><circle cx="18" cy="18" r="6.800" fill="#fff" /><circle cx="18" cy="18" r="5.200" fill="#4382ea" /></g>,
  },
  {
    name: "Acrobat", open: true,
    art: <g><path d="M4 4.500h28v28H4z" fill="#2c0704" stroke="#c81e14" strokeWidth="2" /><path d="M17 9c3 0 1 8-2 13-3 4-6 6-6 3s6-5 12-5c7 0 7 4 4 4-5 0-10-9-9-14z" fill="none" stroke="#fff" strokeWidth="1.600" /></g>,
  },
  { name: "Rhinoceros", open: true, front: true, art: null },
  {
    name: "Photoshop", open: true,
    art: <g><path d="M4 4.500h28v27H4z" fill="#04212f" stroke="#1fc3ee" strokeWidth="2" /><text x="18" y="24" textAnchor="middle" fontFamily="Liberation Sans" fontWeight="700" fontSize="17" fill="#27c6f2">Ps</text></g>,
  },
  {
    name: "Photo Viewer", open: true,
    art: <g><path d="M4 12V5h7M25 5h7v7M32 24v7h-7M11 31H4v-7" fill="none" stroke="#4a9fdc" strokeWidth="3" /><path d="M6 7h24v22H6z" fill="#4a97dc" /><path d="M6 13c8-3 16 2 24-1v7H6z" fill="#dff0fa" /><path d="M6 19c4-2 8 0 12 0s8-3 12-2v4H6z" fill="#3c7a52" /><path d="M6 21h24v8H6z" fill="#3584b8" /></g>,
  },
];

export default function App() {
  return (
    <>
      <Global />
      <Defs />
      <Window>
        <TitleBar>
          <RhinoGlyph size={16} />
          <WindowTitle>module 2 (171 KB) - Rhinoceros 5.0 Educational Lab License - [Perspective]</WindowTitle>
        </TitleBar>
        <MenuBar>
          {menus.map((m) => <MenuItem key={m}>{m}</MenuItem>)}
        </MenuBar>

        <CommandArea>
          <CommandBox>
            <History>1 polysurface added to selection.</History>
            <Prompt>
              <b>Command:</b>
              <CommandInput defaultValue="Rotate3D" />
            </Prompt>
          </CommandBox>
          <Suggestions>
            {hints.map((h, i) => <Suggestion key={h} $active={i === 0}>{h}</Suggestion>)}
          </Suggestions>
          <Marker width="160" height="84" viewBox="0 0 160 84" aria-hidden>
            <ellipse cx="68" cy="41" rx="78" ry="33" fill="none" stroke="#e8242b" strokeWidth="8" />
          </Marker>
        </CommandArea>

        <TabStrip>
          {toolTabs.map(([name, w], i) => <ToolTab key={name} $w={w} $on={i === 0}>{name}</ToolTab>)}
        </TabStrip>
        <ToolBar>
          <Grip />
          {tools.map(([name, art, fly]) => (
            <ToolButton key={name} aria-label={name}><ToolIcon art={art} flyout={fly} /></ToolButton>
          ))}
        </ToolBar>

        <Body>
          <SideTools>
            <SideGrip />
            <SideGrid>
              {side.map(([name, art, fly]) => (
                <ToolButton key={name} aria-label={name}><ToolIcon art={art} flyout={fly} /></ToolButton>
              ))}
            </SideGrid>
          </SideTools>
          <Center>
            <Viewport />
            <ViewTabs>
              <ViewTab $w={78} $on>Perspective</ViewTab>
              <ViewTab $w={38}>Top</ViewTab>
              <ViewTab $w={46}>Front</ViewTab>
              <ViewTab $w={46}>Right</ViewTab>
              <ViewTab $w={31} aria-label="Add viewport">
                <svg width="12" height="12" viewBox="0 0 12 12" aria-hidden>
                  <path d="M4.500 1.500h3v3h3v3h-3v3h-3v-3h-3v-3h3z" fill="#fff" stroke="#555" />
                </svg>
              </ViewTab>
            </ViewTabs>
          </Center>
          <Dock>
            <DockGrip />
            <LayerPanel />
            <Splitter />
            <PropPanel />
          </Dock>
        </Body>

        <SnapBar>
          <SnapGrip />
          {snaps.map(([name, on]) => (
            <Snap key={name} $big={name === "Project" || name === "Disable"}>
              <input type="checkbox" defaultChecked={on} />
              {name}
            </Snap>
          ))}
        </SnapBar>
        <StatusBar>
          <Cell $w={57}>CPlane</Cell>
          <Cell $w={88}>x 14'-6 1/8"</Cell>
          <Cell $w={88}>y 47'-7 1/2"</Cell>
          <Cell $w={88}>z 0"</Cell>
          <Cell $w={88}>Feet</Cell>
          <Cell $w={173} $left><Swatch />3D</Cell>
          {modes.map(([name, w, on]) => <Cell key={name} $w={w} $on={on}>{name}</Cell>)}
          <StatusNote>Available physical memory: 24303 MB</StatusNote>
        </StatusBar>
        <TaskBar>
          {tasks.map((t) => (
            <Task key={t.name} aria-label={t.name} $open={t.open} $front={t.front} $start={t.start}>
              {t.art ? <svg width="36" height="36" viewBox="0 0 36 36" aria-hidden>{t.art}</svg> : <RhinoGlyph size={32} />}
            </Task>
          ))}
        </TaskBar>
      </Window>
    </>
  );
}
